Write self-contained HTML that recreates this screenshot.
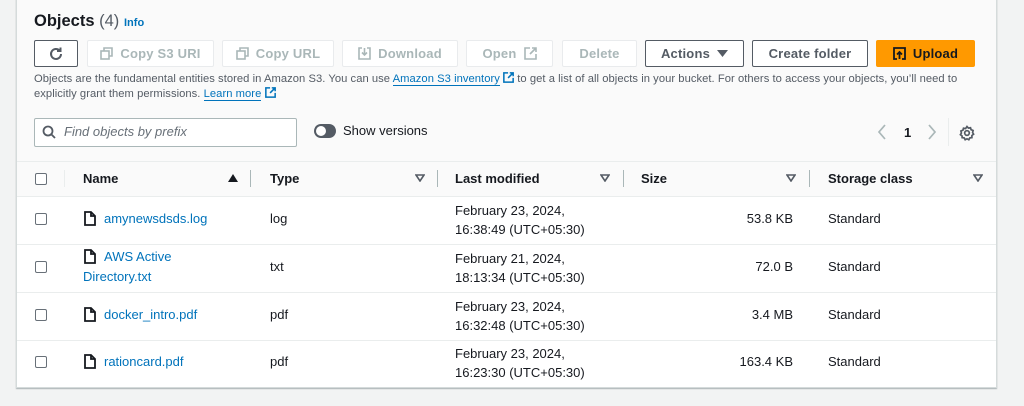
<!DOCTYPE html>
<html><head><meta charset="utf-8"><style>
*{box-sizing:border-box;margin:0;padding:0}
body{width:1024px;height:406px;background:#f2f3f3;font-family:"Liberation Sans",sans-serif;font-size:13px;color:#16191f;position:relative;overflow:hidden}
.abs{position:absolute}
#panel{left:16px;top:-2px;width:981px;height:390px;background:#fafafa;border:1px solid #d5dbdb;border-top:none;box-shadow:0 1px 1px rgba(0,28,36,.3)}
.btn{position:absolute;top:40px;height:27px;border:1px solid #e9ebed;background:#fff;color:#aab7b8;font-weight:bold;font-size:13px;display:flex;align-items:center;justify-content:center;gap:7px;border-radius:2px;letter-spacing:.2px}
.btn.on{border-color:#545b64;color:#545b64}
.btn.up{background:#ff9900;border-color:#ff9900;color:#16191f}
.desc{left:34px;font-size:11.2px;color:#545b64;letter-spacing:.05px}
a{color:#0073bb;text-decoration:none}
.u{border-bottom:1px solid #0073bb}
.row{position:absolute;left:17px;width:979px;background:#fff;border-top:1px solid #eaeded}
.cb{position:absolute;left:18px;width:12px;height:12px;border:1.5px solid #687078;border-radius:2px;background:#fff}
.c{position:absolute;font-size:13px;line-height:22px}
.d{line-height:19px}
.sep{position:absolute;top:170px;width:1px;height:17px;background:#aab7b8}
.sort{position:absolute;top:174px}
.hd{position:absolute;top:171px;font-weight:bold;color:#16191f}
</style></head><body>
<div id="panel" class="abs"></div>
<div class="abs" style="left:34px;top:12px;font-size:16.5px;font-weight:bold">Objects <span style="font-weight:normal;color:#545b64">(4)</span></div>
<div class="abs" style="left:124px;top:17px;font-size:11px;font-weight:bold;color:#0073bb">Info</div>

<div class="btn on" style="left:34px;width:44px"><svg width="16" height="16" viewBox="0 0 16 16" fill="none" stroke="#545b64" stroke-width="2"><path d="M13 8a5 5 0 1 1-1.5-3.6"/><path d="M12.5 1.5v3.5H9"/></svg></div>
<div class="btn" style="left:87px;width:127px"><svg width="13" height="13" viewBox="0 0 13 13" fill="none" stroke="#aab7b8" stroke-width="1.6"><rect x="1" y="4" width="8" height="8"/><path d="M4 4V1h8v8H9"/></svg>Copy S3 URI</div>
<div class="btn" style="left:222px;width:112px"><svg width="13" height="13" viewBox="0 0 13 13" fill="none" stroke="#aab7b8" stroke-width="1.6"><rect x="1" y="4" width="8" height="8"/><path d="M4 4V1h8v8H9"/></svg>Copy URL</div>
<div class="btn" style="left:342px;width:116px"><svg width="13" height="13" viewBox="0 0 13 13" fill="none" stroke="#aab7b8" stroke-width="1.6"><path d="M4 1H1v11h11V1H9"/><path d="M6.5 1v7M4 5.5l2.5 2.5L9 5.5"/></svg>Download</div>
<div class="btn" style="left:466px;width:87px">Open<svg width="13" height="13" viewBox="0 0 13 13" fill="none" stroke="#aab7b8" stroke-width="1.6"><path d="M6 1H1v11h11V7"/><path d="M8 1h4v4M12 1L6 7"/></svg></div>
<div class="btn" style="left:562px;width:75px">Delete</div>
<div class="btn on" style="left:645px;width:99px">Actions <svg width="11" height="8" viewBox="0 0 11 8"><path d="M0 0h11L5.5 7z" fill="#545b64"/></svg></div>
<div class="btn on" style="left:752px;width:116px">Create folder</div>
<div class="btn up" style="left:876px;width:99px"><svg width="13" height="13" viewBox="0 0 13 13" fill="none" stroke="#16191f" stroke-width="1.8"><path d="M4 12H1V1h11v11H9"/><path d="M6.5 12V5M4 7.5l2.5-2.5L9 7.5"/></svg>Upload</div>

<div class="abs desc" style="top:72px">Objects are the fundamental entities stored in Amazon S3. You can use <a class="u">Amazon S3 inventory</a> <svg width="11" height="11" viewBox="0 0 13 13" fill="none" stroke="#0073bb" stroke-width="1.8" style="vertical-align:-1px"><path d="M6 1H1v11h11V7"/><path d="M8 1h4v4M12 1L6 7"/></svg> to get a list of all objects in your bucket. For others to access your objects, you’ll need to</div>
<div class="abs desc" style="top:87px">explicitly grant them permissions. <a class="u">Learn more</a> <svg width="11" height="11" viewBox="0 0 13 13" fill="none" stroke="#0073bb" stroke-width="1.8" style="vertical-align:-1px"><path d="M6 1H1v11h11V7"/><path d="M8 1h4v4M12 1L6 7"/></svg></div>

<div class="abs" style="left:34px;top:118px;width:263px;height:29px;border:1px solid #aab7b8;border-radius:2px;background:#fff"></div>
<svg class="abs" style="left:42px;top:125px" width="14" height="14" viewBox="0 0 14 14" fill="none" stroke="#545b64" stroke-width="1.8"><circle cx="6" cy="6" r="4.5"/><path d="M9.5 9.5L13 13"/></svg>
<div class="abs" style="left:64px;top:124px;font-style:italic;color:#687078">Find objects by prefix</div>
<div class="abs" style="left:314px;top:124px;width:22px;height:14px;border-radius:7px;background:#545b64"></div>
<div class="abs" style="left:316px;top:126px;width:10px;height:10px;border-radius:5px;background:#fff"></div>
<div class="abs" style="left:343px;top:123px">Show versions</div>
<svg class="abs" style="left:877px;top:124px" width="10" height="16" viewBox="0 0 10 16" fill="none" stroke="#aab7b8" stroke-width="1.7"><path d="M8 1L2 8l6 7"/></svg>
<div class="abs" style="left:904px;top:125px;font-weight:bold">1</div>
<svg class="abs" style="left:927px;top:124px" width="10" height="16" viewBox="0 0 10 16" fill="none" stroke="#aab7b8" stroke-width="1.7"><path d="M2 1l6 7-6 7"/></svg>
<div class="abs" style="left:948px;top:118px;width:1px;height:28px;background:#eaeded"></div>
<svg class="abs" style="left:959px;top:125px" width="16" height="16" viewBox="0 0 16 16" fill="none" stroke="#545b64" stroke-width="1.7"><circle cx="8" cy="8" r="2.3"/><path d="M8 1.5l1.4 1.6 2.1-.4.6 2 2 .8-.5 2.1 1 1.6-1.7 1.3v2.1l-2.1.3-1 1.8-1.8-.9-1.8.9-1-1.8-2.1-.3V11L1.4 9.7l1-1.6-.5-2.1 2-.8.6-2 2.1.4z"/></svg>

<div class="abs" style="left:17px;top:161px;width:979px;height:1px;background:#eaeded"></div>
<div class="cb" style="left:35px;top:173px"></div>
<div class="abs" style="left:64px;top:170px;width:1px;height:17px;background:#eaeded"></div>
<div class="hd" style="left:83px">Name</div>
<svg class="sort" style="left:228px" width="10" height="8" viewBox="0 0 10 8"><path d="M0 8h10L5 0z" fill="#16191f"/></svg>
<div class="sep" style="left:250px"></div>
<div class="hd" style="left:270px">Type</div>
<svg class="sort" style="left:415px" width="10" height="8" viewBox="0 0 10 8"><path d="M1 1h8L5 7z" fill="none" stroke="#545b64" stroke-width="1.6"/></svg>
<div class="sep" style="left:437px"></div>
<div class="hd" style="left:455px">Last modified</div>
<svg class="sort" style="left:600px" width="10" height="8" viewBox="0 0 10 8"><path d="M1 1h8L5 7z" fill="none" stroke="#545b64" stroke-width="1.6"/></svg>
<div class="sep" style="left:623px"></div>
<div class="hd" style="left:641px">Size</div>
<svg class="sort" style="left:786px" width="10" height="8" viewBox="0 0 10 8"><path d="M1 1h8L5 7z" fill="none" stroke="#545b64" stroke-width="1.6"/></svg>
<div class="sep" style="left:809px"></div>
<div class="hd" style="left:828px">Storage class</div>
<svg class="sort" style="left:973px" width="10" height="8" viewBox="0 0 10 8"><path d="M1 1h8L5 7z" fill="none" stroke="#545b64" stroke-width="1.6"/></svg>

<div class="row" style="top:196px;height:48px"></div>
<div class="row" style="top:244px;height:48px"></div>
<div class="row" style="top:292px;height:48px"></div>
<div class="row" style="top:340px;height:47px"></div>

<div class="cb" style="left:35px;top:213px"></div>
<svg class="abs" style="left:84px;top:211px" width="12" height="15" viewBox="0 0 12 15" fill="none" stroke="#16191f" stroke-width="1.8"><path d="M1 1h6l4 4v9H1z"/><path d="M7 1v4h4"/></svg>
<div class="c" style="left:104px;top:208px"><a>amynewsdsds.log</a></div>
<div class="c" style="left:270px;top:208px">log</div>
<div class="c d" style="left:455px;top:201px">February 23, 2024,<br>16:38:49 (UTC+05:30)</div>
<div class="c" style="left:740px;top:208px;width:53px;text-align:right">53.8 KB</div>
<div class="c" style="left:828px;top:208px">Standard</div>

<div class="cb" style="left:35px;top:261px"></div>
<svg class="abs" style="left:84px;top:249px" width="12" height="15" viewBox="0 0 12 15" fill="none" stroke="#16191f" stroke-width="1.8"><path d="M1 1h6l4 4v9H1z"/><path d="M7 1v4h4"/></svg>
<div class="c" style="left:104px;top:246px"><a>AWS Active</a></div>
<div class="c" style="left:83px;top:266px"><a>Directory.txt</a></div>
<div class="c" style="left:270px;top:256px">txt</div>
<div class="c d" style="left:455px;top:249px">February 21, 2024,<br>18:13:34 (UTC+05:30)</div>
<div class="c" style="left:740px;top:256px;width:53px;text-align:right">72.0 B</div>
<div class="c" style="left:828px;top:256px">Standard</div>

<div class="cb" style="left:35px;top:309px"></div>
<svg class="abs" style="left:84px;top:307px" width="12" height="15" viewBox="0 0 12 15" fill="none" stroke="#16191f" stroke-width="1.8"><path d="M1 1h6l4 4v9H1z"/><path d="M7 1v4h4"/></svg>
<div class="c" style="left:104px;top:304px"><a>docker_intro.pdf</a></div>
<div class="c" style="left:270px;top:304px">pdf</div>
<div class="c d" style="left:455px;top:297px">February 23, 2024,<br>16:32:48 (UTC+05:30)</div>
<div class="c" style="left:740px;top:304px;width:53px;text-align:right">3.4 MB</div>
<div class="c" style="left:828px;top:304px">Standard</div>

<div class="cb" style="left:35px;top:356px"></div>
<svg class="abs" style="left:84px;top:354px" width="12" height="15" viewBox="0 0 12 15" fill="none" stroke="#16191f" stroke-width="1.8"><path d="M1 1h6l4 4v9H1z"/><path d="M7 1v4h4"/></svg>
<div class="c" style="left:104px;top:351px"><a>rationcard.pdf</a></div>
<div class="c" style="left:270px;top:351px">pdf</div>
<div class="c d" style="left:455px;top:344px">February 23, 2024,<br>16:23:30 (UTC+05:30)</div>
<div class="c" style="left:720px;top:351px;width:73px;text-align:right">163.4 KB</div>
<div class="c" style="left:828px;top:351px">Standard</div>
</body></html>
